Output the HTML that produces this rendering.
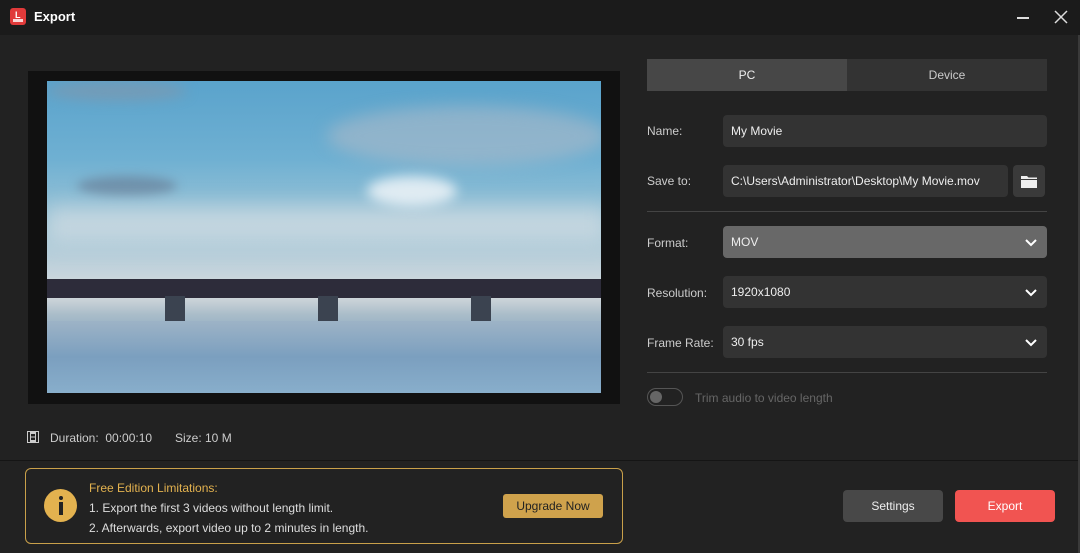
<!DOCTYPE html>
<html><head><meta charset="utf-8"><style>
*{margin:0;padding:0;box-sizing:border-box}
body{width:1080px;height:553px;background:#222;font-family:"Liberation Sans",sans-serif;position:relative;overflow:hidden;color:#ddd;font-size:12px}
.a{position:absolute}
.lbl{position:absolute;left:647px;color:#ccc;font-size:12px}
.fld{position:absolute;left:723px;width:324px;height:32px;background:#333;border-radius:4px;color:#eee;padding:0 8px;line-height:32px;font-size:12px}
.chev{position:absolute;right:10px;top:11px;width:12px;height:10px}
</style></head><body>
<div class="a" style="left:0;top:0;width:1080px;height:35px;background:#1b1b1b"></div>
<div class="a" style="left:10px;top:8px;width:16px;height:17px;background:#e03a3a;border-radius:3px"><div class="a" style="left:3px;top:11px;width:10px;height:3px;background:#fff;opacity:.8"></div><div class="a" style="left:5px;top:2px;font-size:9px;color:#fff;font-weight:bold">L</div></div>
<div class="a" style="left:34px;top:9px;font-size:13px;font-weight:bold;color:#fff">Export</div>
<div class="a" style="left:1017px;top:17px;width:12px;height:1.5px;background:#ddd"></div>
<svg class="a" style="left:1054px;top:10px" width="14" height="14"><path d="M1 1L13 13M13 1L1 13" stroke="#ddd" stroke-width="1.5"/></svg>
<div class="a" style="left:1078px;top:35px;width:2px;height:518px;background:#3a3a3a"></div>

<div class="a" style="left:28px;top:71px;width:592px;height:333px;background:#111"></div>
<div class="a" style="left:47px;top:81px;width:554px;height:312px;overflow:hidden;background:linear-gradient(180deg,#5aa3cc 0%,#6fb0d2 25%,#9cc4d6 45%,#c6d4dc 62%,#d8dcde 68%,#a9bcc9 75%,#7ea3bd 85%,#86aac4 100%)">
<div class="a" style="left:0;top:0;width:140px;height:20px;background:rgba(130,150,170,.6);border-radius:50%;filter:blur(6px)"></div>
<div class="a" style="left:280px;top:25px;width:280px;height:60px;background:rgba(170,185,200,.6);border-radius:50%;filter:blur(8px)"></div>
<div class="a" style="left:30px;top:95px;width:100px;height:20px;background:rgba(100,120,145,.6);border-radius:50%;filter:blur(5px)"></div>
<div class="a" style="left:0;top:125px;width:560px;height:35px;background:rgba(225,228,232,.55);filter:blur(10px)"></div>
<div class="a" style="left:320px;top:95px;width:90px;height:30px;background:rgba(245,248,250,.8);border-radius:50%;filter:blur(6px)"></div>
<div class="a" style="left:0;top:198px;width:554px;height:19px;background:#2d2c3a"></div>
<div class="a" style="left:118px;top:215px;width:20px;height:28px;background:#3b4350"></div>
<div class="a" style="left:271px;top:215px;width:20px;height:28px;background:#3b4350"></div>
<div class="a" style="left:424px;top:215px;width:20px;height:28px;background:#3b4350"></div>
<div class="a" style="left:0;top:240px;width:554px;height:72px;background:linear-gradient(180deg,#9db3c6,#7b9fbf 50%,#88aecb)"></div>
</div>

<svg class="a" style="left:27px;top:431px" width="12" height="12"><rect x="0.5" y="0.5" width="11" height="11" fill="none" stroke="#ccc"/><rect x="3" y="1" width="6" height="10" fill="#ccc"/><rect x="4" y="3" width="4" height="2.5" fill="#222"/><rect x="4" y="6.5" width="4" height="2.5" fill="#222"/></svg>
<div class="a" style="left:50px;top:431px;color:#ccc">Duration:&nbsp; 00:00:10</div>
<div class="a" style="left:175px;top:431px;color:#ccc">Size: 10 M</div>

<div class="a" style="left:647px;top:59px;width:200px;height:32px;background:#474747;color:#eee;text-align:center;line-height:32px">PC</div>
<div class="a" style="left:847px;top:59px;width:200px;height:32px;background:#333;color:#ccc;text-align:center;line-height:32px">Device</div>

<div class="lbl" style="top:124px">Name:</div>
<div class="fld" style="top:115px">My Movie</div>
<div class="lbl" style="top:174px">Save to:</div>
<div class="fld" style="top:165px;width:285px">C:\Users\Administrator\Desktop\My Movie.mov</div>
<div class="a" style="left:1013px;top:165px;width:32px;height:32px;background:#3a3a3a;border-radius:4px"><svg class="a" style="left:8px;top:10px" width="16" height="13"><path d="M0 1h6l1.5 1.5H16V13H0z" fill="#eee"/><rect x="0" y="4" width="16" height="1" fill="#3a3a3a"/></svg></div>
<div class="a" style="left:647px;top:211px;width:400px;height:1px;background:#444"></div>

<div class="lbl" style="top:236px">Format:</div>
<div class="fld" style="top:226px;background:#686868">MOV<svg class="chev" viewBox="0 0 12 10"><path d="M1 3l5 5 5-5" stroke="#fff" stroke-width="2" fill="none"/></svg></div>
<div class="lbl" style="top:286px">Resolution:</div>
<div class="fld" style="top:276px">1920x1080<svg class="chev" viewBox="0 0 12 10"><path d="M1 3l5 5 5-5" stroke="#fff" stroke-width="2" fill="none"/></svg></div>
<div class="lbl" style="top:336px">Frame Rate:</div>
<div class="fld" style="top:326px">30 fps<svg class="chev" viewBox="0 0 12 10"><path d="M1 3l5 5 5-5" stroke="#fff" stroke-width="2" fill="none"/></svg></div>
<div class="a" style="left:647px;top:372px;width:400px;height:1px;background:#444"></div>
<div class="a" style="left:647px;top:388px;width:36px;height:18px;border:1px solid #555;border-radius:9px"><div class="a" style="left:2px;top:2px;width:12px;height:12px;border-radius:50%;background:#666"></div></div>
<div class="a" style="left:695px;top:391px;color:#666">Trim audio to video length</div>

<div class="a" style="left:0;top:460px;width:1078px;height:1px;background:#151515"></div>
<div class="a" style="left:25px;top:468px;width:598px;height:76px;border:1px solid #c9a04a;border-radius:6px"></div>
<div class="a" style="left:44px;top:489px;width:33px;height:33px;border-radius:50%;background:#e3b24f"><div class="a" style="left:14.5px;top:7px;width:4px;height:4px;border-radius:50%;background:#222"></div><div class="a" style="left:14.5px;top:13px;width:4px;height:13px;background:#222"></div></div>
<div class="a" style="left:89px;top:481px;color:#e3b24f">Free Edition Limitations:</div>
<div class="a" style="left:89px;top:501px;color:#ddd">1. Export the first 3 videos without length limit.</div>
<div class="a" style="left:89px;top:521px;color:#ddd">2. Afterwards, export video up to 2 minutes in length.</div>
<div class="a" style="left:503px;top:494px;width:100px;height:24px;background:#cfa24c;border-radius:3px;color:#222;text-align:center;line-height:24px">Upgrade Now</div>
<div class="a" style="left:843px;top:490px;width:100px;height:32px;background:#484848;border-radius:4px;color:#eee;text-align:center;line-height:32px">Settings</div>
<div class="a" style="left:955px;top:490px;width:100px;height:32px;background:#f15451;border-radius:4px;color:#fff;text-align:center;line-height:32px">Export</div>
</body></html>
